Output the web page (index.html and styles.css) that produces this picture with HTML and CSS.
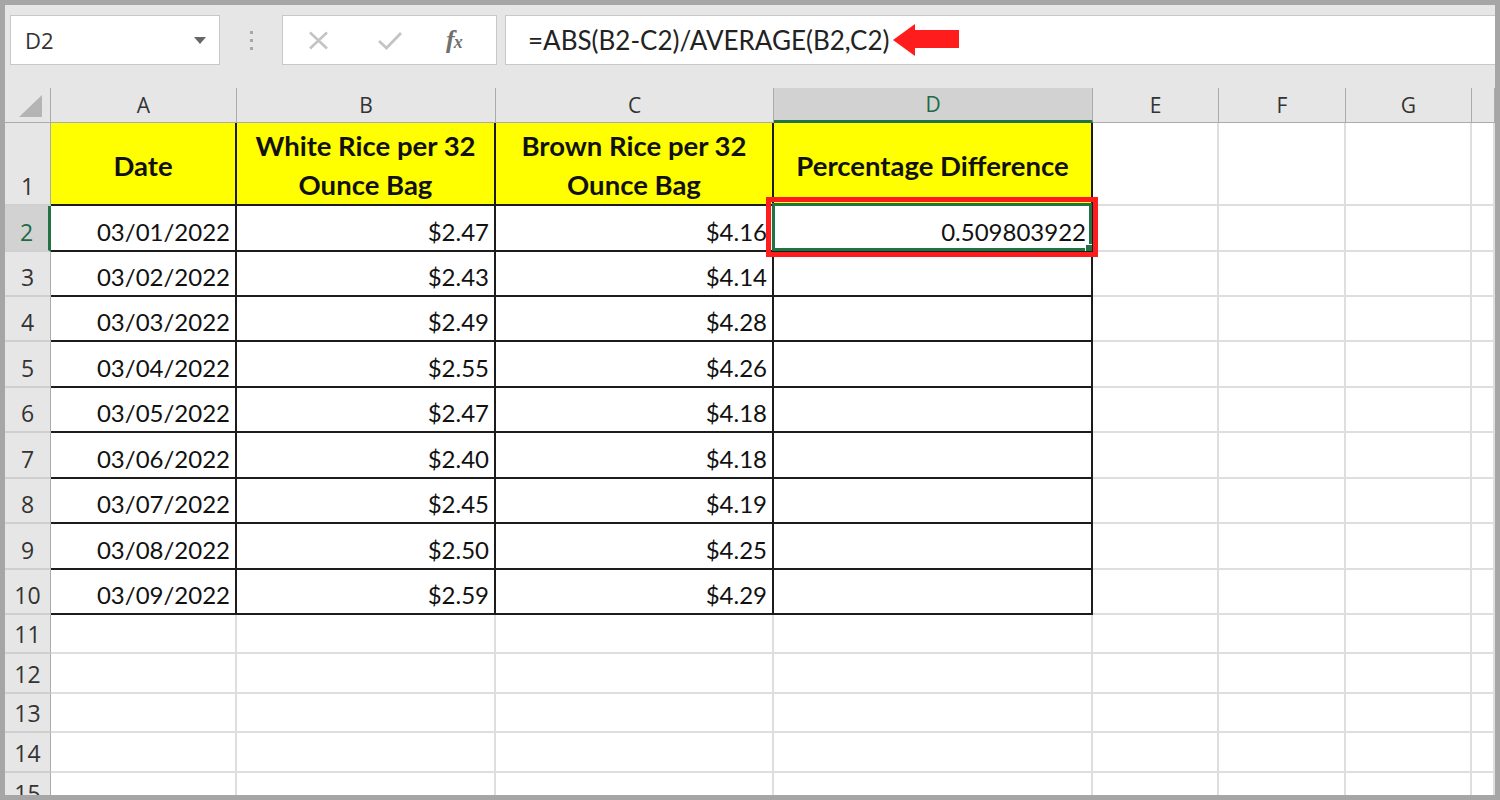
FILE: index.html
```html
<!DOCTYPE html>
<html lang="en">
<head>
    <meta charset="UTF-8">
    <title>Percentage Difference</title>
    <link rel="stylesheet" href="styles.css">
</head>
<body>
<div class="window">
    <div class="formula-bar">
        <div class="name-box"><span>D2</span><span class="caret"></span></div>
        <div class="grip"><i></i><i></i><i></i></div>
        <div class="fx-box">
            <svg class="ico-x" width="23" height="19" viewBox="0 0 23 19"><path d="M3 1.5 L20 17.5 M20 1.5 L3 17.5" stroke="#c4c4c4" stroke-width="2.6" fill="none"/></svg>
            <svg class="ico-ok" width="26" height="19" viewBox="0 0 26 19"><path d="M2 10 L9.5 17 L24 2" stroke="#c4c4c4" stroke-width="2.8" fill="none"/></svg>
            <span class="fx">f<small>x</small></span>
        </div>
        <div class="formula">
            <span>=ABS(B2-C2)/AVERAGE(B2,C2)</span>
            <svg class="arrow" width="66" height="33" viewBox="0 0 66 33"><polygon points="0,16 22,0 22,6 66,6 66,24 22,24 22,32" fill="#ff1c1c"/></svg>
        </div>
    </div>
    <div class="sheet" id="sheet"></div>
</div>

<script>
    const dates = ['03/01/2022','03/02/2022','03/03/2022','03/04/2022','03/05/2022','03/06/2022','03/07/2022','03/08/2022','03/09/2022'];
    const white = ['2.47','2.43','2.49','2.55','2.47','2.40','2.45','2.50','2.59'];
    const brown = ['4.16','4.14','4.28','4.26','4.18','4.18','4.19','4.25','4.29'];
    const letters = ['A','B','C','D','E','F','G',''];

    let html = '<div class="ch corner"><div class="tri"></div></div>';
    html += letters.map(l => `<div class="ch${l === 'D' ? ' active' : ''}">${l}</div>`).join('');

    html += '<div class="rh">1</div>';
    html += ['Date', 'White Rice per 32<br>Ounce Bag', 'Brown Rice per 32<br>Ounce Bag', 'Percentage Difference']
        .map(t => `<div class="c t hd">${t}</div>`).join('');
    html += '<div class="c"></div>'.repeat(4);

    dates.forEach((d, i) => {
        const n = i + 2;
        html += `<div class="rh${n === 2 ? ' active' : ''}">${n}</div>`;
        html += `<div class="c t num">${d}</div>`;
        html += `<div class="c t num">$${white[i]}</div>`;
        html += `<div class="c t num">$${brown[i]}</div>`;
        if (n === 2) {
            html += '<div class="c t num sel">0.509803922<span class="handle"></span></div>';
        } else {
            html += '<div class="c t num"></div>';
        }
        html += '<div class="c"></div>'.repeat(4);
    });

    for (let n = 11; n <= 15; n++) {
        html += `<div class="rh">${n}</div>` + '<div class="c"></div>'.repeat(8);
    }

    document.getElementById('sheet').innerHTML = html;
</script>
</body>
</html>
```

FILE: styles.css
```css
body { margin: 0; background: #a6a6a6; }
.window { height: 800px; box-sizing: border-box; border: 5px solid #a6a6a6; background: #e6e6e6; overflow: hidden; }

/* formula bar */
.formula-bar { height: 83px; box-sizing: border-box; padding: 10px 0 0 5px; display: flex; align-items: flex-start; }
.name-box { width: 210px; height: 50px; box-sizing: border-box; background: #fff; border: 1px solid #c8c8c8; display: flex; align-items: center; padding-left: 14px; font: 22px 'Open Sans', sans-serif; color: #333; }
.caret { margin-left: auto; margin-right: 13px; border-left: 6px solid transparent; border-right: 6px solid transparent; border-top: 7px solid #666; }
.grip { width: 62px; height: 50px; display: flex; flex-direction: column; align-items: center; justify-content: center; gap: 5px; }
.grip i { width: 3px; height: 3px; background: #a8a8a8; }
.fx-box { width: 215px; height: 50px; box-sizing: border-box; background: #fff; border: 1px solid #c8c8c8; display: flex; align-items: center; }
.ico-x { margin-left: 24px; }
.ico-ok { margin-left: 47px; }
.fx { margin-left: 43px; font: italic 700 26px 'Liberation Serif', serif; color: #707070; letter-spacing: -1px; }
.fx small { font-size: 18px; }
.formula { flex: 1; margin-left: 8px; height: 50px; box-sizing: border-box; background: #fff; border: 1px solid #c8c8c8; border-right: none; display: flex; align-items: center; padding-left: 22px; font: 26px 'Lato', sans-serif; color: #222; }
.arrow { margin-left: 4px; }

/* sheet grid */
.sheet { display: grid; grid-template-columns: 46px 186px 259px 278px 319px 126px 127px 126px 1fr; grid-template-rows: 35px 83px 46px 45px 45px 46px 45px 46px 45px 46px 45px 39px 40px 39px 40px 40px; font: 24px 'Lato', sans-serif; color: #111; }
.sheet > div { box-sizing: border-box; min-width: 0; }
.ch { background: #e6e6e6; border-right: 1px solid #ababab; border-bottom: 1px solid #ababab; display: flex; align-items: center; justify-content: center; font: 21px 'Open Sans', sans-serif; color: #333; }
.ch.active { background: #d2d2d2; border-bottom: 3px solid #217346; color: #1e6b45; }
.corner { justify-content: flex-end; align-items: flex-end; padding: 0 8px 5px 0; }
.tri { width: 23px; height: 22px; background: #b4b4b4; clip-path: polygon(100% 0, 100% 100%, 0 100%); }
.rh { background: #e6e6e6; border-right: 1px solid #ababab; border-bottom: 2px solid #cfcfcf; display: flex; align-items: flex-end; justify-content: center; padding-bottom: 2px; font: 23px 'Open Sans', sans-serif; color: #333; }
.rh.active { background: #d2d2d2; border-right: 3px solid #217346; color: #1e6b45; }
.c { background: #fff; border-right: 2px solid #dedede; border-bottom: 2px solid #dedede; display: flex; align-items: flex-end; line-height: 30px; padding-bottom: 3px; }
.c.t { border-right-color: #1c1c1c; border-bottom-color: #1c1c1c; }
.num { justify-content: flex-end; padding-right: 5px; }
.hd { background: #ffff00; font-size: 27.5px; font-weight: 700; align-items: center; justify-content: center; text-align: center; line-height: 39px; padding: 3px 0 0; }

/* selected cell + highlight */
.sel { position: relative; }
.sel::before { content: ''; position: absolute; left: -2px; top: -3px; right: -1px; bottom: -1px; border: 3px solid #217346; }
.sel::after { content: ''; position: absolute; left: -8px; top: -9px; right: -7px; bottom: -7px; border: 5px solid #ff1c1c; }
.handle { position: absolute; right: -1px; bottom: -1px; width: 6px; height: 6px; background: #217346; border-left: 1px solid #fff; border-top: 1px solid #fff; z-index: 1; }
```
